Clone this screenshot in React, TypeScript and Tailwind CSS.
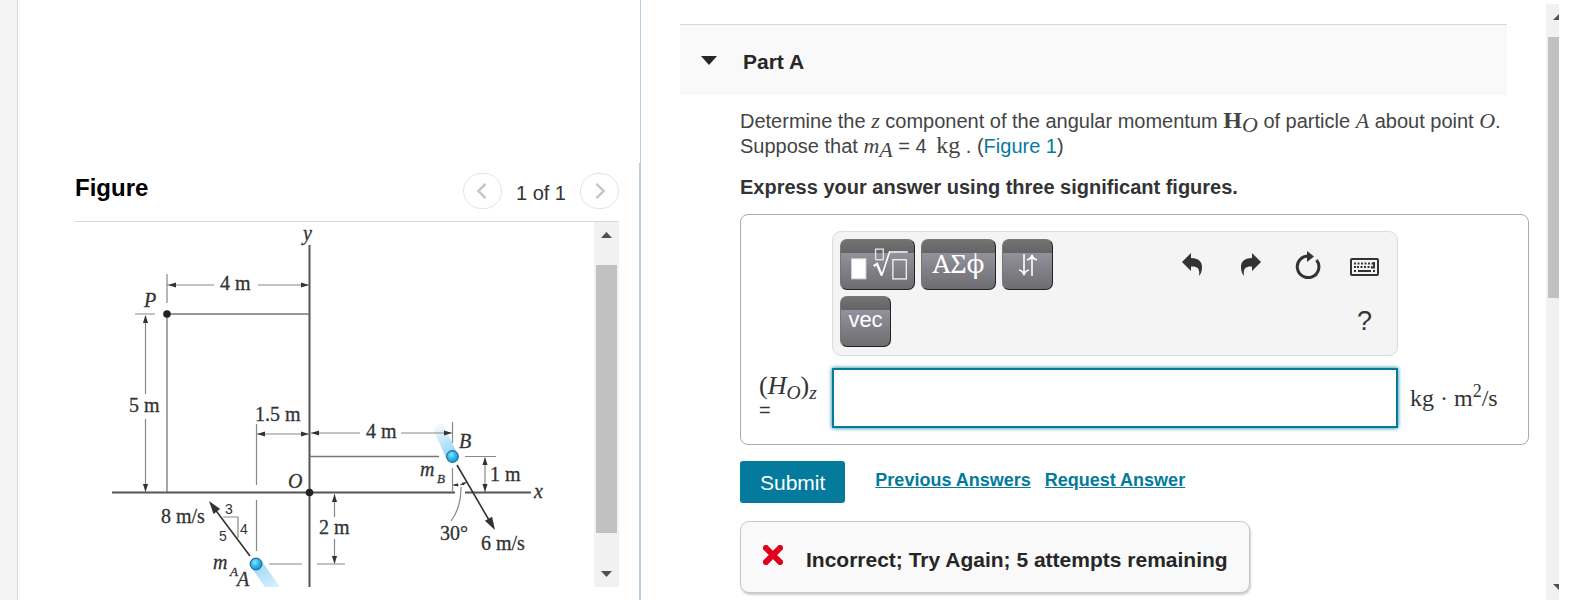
import { useState } from "react";
import type { ReactNode } from "react";

const LINKS = ["Previous Answers", "Request Answer"];

// italic maths symbol inside a sentence
function Sym({ children }: { children: ReactNode }) {
  return <i className="font-['Liberation_Serif',serif] text-[22px] leading-[0]">{children}</i>;
}

function Arrow({ x, y, angle, size = 8 }: { x: number; y: number; angle: number; size?: number }) {
  return (
    <path
      d={`M0 0L${-size} ${-size * 0.32}L${-size} ${size * 0.32}Z`}
      transform={`translate(${x} ${y}) rotate(${angle})`}
      fill="#333"
    />
  );
}

function Diagram() {
  return (
    <svg viewBox="75 222 519 365" className="block w-full min-w-0 flex-1 overflow-visible font-['Liberation_Serif',serif]" role="img" aria-label="Figure 1">
      <defs>
        <radialGradient id="ball" cx="0.4" cy="0.35" r="0.7">
          <stop offset="0" stopColor="#8fe0ff" />
          <stop offset="0.5" stopColor="#2bbcf2" />
          <stop offset="1" stopColor="#0a90d0" />
        </radialGradient>
        <linearGradient id="trailA" gradientUnits="userSpaceOnUse" x1="256" y1="564" x2="276" y2="590">
          <stop offset="0" stopColor="#9cd9f7" />
          <stop offset="1" stopColor="#dcf1fc" />
        </linearGradient>
        <linearGradient id="trailB" gradientUnits="userSpaceOnUse" x1="452" y1="456" x2="434" y2="424">
          <stop offset="0" stopColor="#8fd3f5" />
          <stop offset="1" stopColor="#ffffff" />
        </linearGradient>
      </defs>

      <path d="M251 567L261 560L280 587H265Z" fill="url(#trailA)" />
      <path d="M446 458L456 451L443 424L431 424Z" fill="url(#trailB)" />

      {/* axes */}
      <g stroke="#555" strokeWidth="2" fill="none">
        <path d="M309.500 245V587M112 492.500H455M465 492.500H531" />
      </g>

      {/* position lines */}
      <g stroke="#777" strokeWidth="1.300" fill="none">
        <path d="M167 314H309M167 314V492M310 456.500H439" />
      </g>

      {/* dimension lines */}
      <g stroke="#888" strokeWidth="1.200" fill="none">
        <path d="M167 274V303M167 285H214M258 285H309" />
        <path d="M135 314H155M145.500 316V394M145.500 419V492" />
        <path d="M256.500 424V485M256.500 500V551M257 434H309" />
        <path d="M311 433H360M401 433H452M452.500 422V443M452.500 468V492" />
        <path d="M465 456.500H496M485 458V492" />
        <path d="M334.500 494V517M334.500 539V563M269 564H302M317 564H345" />
        <path d="M223 517H238V538" />
        <path d="M461 487Q461 508 451 521" />
      </g>
      <path d="M453.500 485Q460 486 467 482" stroke="#333" strokeWidth="1.300" strokeDasharray="5 2" fill="none" />
      <path d="M250 556L211 504M457 465L493 527" stroke="#333" strokeWidth="1.600" fill="none" />

      <Arrow x={168} y={285} angle={180} />
      <Arrow x={309} y={285} angle={0} />
      <Arrow x={145.5} y={315} angle={-90} />
      <Arrow x={145.5} y={492} angle={90} />
      <Arrow x={257} y={434} angle={180} />
      <Arrow x={309} y={434} angle={0} />
      <Arrow x={311} y={433} angle={180} />
      <Arrow x={452} y={433} angle={0} />
      <Arrow x={485} y={457} angle={-90} />
      <Arrow x={485} y={492} angle={90} />
      <Arrow x={334.5} y={494} angle={-90} />
      <Arrow x={334.5} y={564} angle={90} />
      <Arrow x={453} y={485} angle={178} size={5} />
      <Arrow x={467} y={482} angle={-25} size={5} />
      <Arrow x={209} y={501} angle={-127} size={13} />
      <Arrow x={495} y={530} angle={60} size={13} />

      <circle cx="167" cy="314" r="3.800" fill="#222" />
      <circle cx="309.500" cy="492.500" r="3.800" fill="#222" />
      <circle cx="256" cy="564" r="5.800" fill="url(#ball)" stroke="#2a6f96" strokeWidth="1.200" />
      <circle cx="452.500" cy="456.500" r="5.800" fill="url(#ball)" stroke="#2a6f96" strokeWidth="1.200" />

      <g fill="#333" stroke="#333" strokeWidth="0.300" fontSize="20">
        <text x="220" y="290">4 m</text>
        <text x="129" y="412">5 m</text>
        <text x="255" y="421">1.5 m</text>
        <text x="366" y="438">4 m</text>
        <text x="490" y="481">1 m</text>
        <text x="319" y="534">2 m</text>
        <text x="161" y="523">8 m/s</text>
        <text x="440" y="540">30°</text>
        <text x="481" y="550">6 m/s</text>
      </g>
      <g fill="#333" stroke="#333" strokeWidth="0.300" fontSize="20" fontStyle="italic">
        <text x="303" y="240">y</text>
        <text x="144" y="307">P</text>
        <text x="288" y="488">O</text>
        <text x="534" y="498">x</text>
        <text x="459" y="448">B</text>
        <text x="420" y="476">m</text>
        <text x="213" y="569">m</text>
        <text x="237" y="586">A</text>
        <text x="437" y="483" fontSize="13">B</text>
        <text x="230" y="576" fontSize="13">A</text>
      </g>
      <g fill="#333" fontSize="14" className="font-['Liberation_Sans',sans-serif]">
        <text x="225" y="514">3</text>
        <text x="240" y="534">4</text>
        <text x="219" y="541">5</text>
      </g>
    </svg>
  );
}

function FigurePanel() {
  return (
    <div className="flex-1 border-r border-[#bccde0] pt-2.5 pr-5 pl-[57px]">
      <div className="flex h-[49px] items-start justify-between border-b border-[#d8d8d8]">
        <h2 className="pt-0.5 text-[24px] leading-[26px] font-bold text-black">Figure</h2>
        <div className="flex items-center text-[20px] text-[#333]">
          <button aria-label="Previous figure" className="flex h-9 w-[39px] items-center justify-center rounded-full border border-[#e4e4e4]">
            <Chevron d="M11 2L3 10L11 18" />
          </button>
          <span className="px-3.5 pt-1">1 of 1</span>
          <button aria-label="Next figure" className="flex h-9 w-[39px] items-center justify-center rounded-full border border-[#e4e4e4]">
            <Chevron d="M3 2L11 10L3 18" />
          </button>
        </div>
      </div>
      <div className="flex">
        <Diagram />
        <div className="flex w-[25px] flex-col items-center justify-between bg-[#f1f1f1] pt-2.5 pb-2.5">
          <svg viewBox="0 0 11 6" className="h-1.5 w-[11px]"><path d="M0 6L5.500 0L11 6Z" fill="#505050" /></svg>
          <div className="mt-[27px] mb-[38px] w-[21px] flex-1 bg-[#c1c1c1]" />
          <svg viewBox="0 0 11 6" className="h-1.5 w-[11px]"><path d="M0 0L5.500 6L11 0Z" fill="#505050" /></svg>
        </div>
      </div>
    </div>
  );
}

function Chevron({ d }: { d: string }) {
  return (
    <svg viewBox="0 0 14 20" className="h-[18px] w-3.5" fill="none" stroke="#c4c4c4" strokeWidth="2.600">
      <path d={d} />
    </svg>
  );
}

function KeyButton({ label, wide, children }: { label: string; wide?: boolean; children: ReactNode }) {
  return (
    <button
      aria-label={label}
      className={`${wide ? "w-[75px]" : "w-[51px]"} flex h-[51px] items-center justify-center rounded-[7px] border border-t-[#777] border-r-[#222] border-b-[#222] border-l-[#777] bg-[linear-gradient(#737373_0,#646464_13px,#93919c_13px,#6d6d70_100%)] text-white`}
    >
      {children}
    </button>
  );
}

function Toolbar() {
  return (
    <div className="flex justify-between rounded-[9px] border border-[#dcdcdc] bg-[#f4f4f4] pt-[7px] pr-1 pb-2 pl-[7px]">
      <div className="flex w-[214px] flex-wrap gap-1.5">
        <KeyButton label="Templates" wide>
          <svg viewBox="0 0 75 51" className="h-[49px] w-[73px]" fill="none" stroke="#fff">
            <rect x="10.500" y="19.500" width="15" height="21" fill="#fff" stroke="#d0d0d0" />
            <rect x="35.500" y="9.500" width="8" height="11" stroke="#e4e4e4" strokeWidth="1.400" />
            <path d="M33.500 27L37 25L42 37" strokeWidth="2.400" />
            <path d="M42 37L50 12.500H69" strokeWidth="1.600" />
            <rect x="53.500" y="20.500" width="14" height="20" stroke="#f0f0f0" strokeWidth="1.400" />
          </svg>
        </KeyButton>
        <KeyButton label="Symbols" wide>
          <span className="pb-1 font-['Noto_Serif','Liberation_Serif',serif] text-[26px] leading-none">ΑΣϕ</span>
        </KeyButton>
        <KeyButton label="Subscript and superscript">
          <svg viewBox="0 0 20 24" className="h-6 w-5" fill="none" stroke="#fff" strokeWidth="1.600">
            <path d="M6 1V22M1 17Q5 18 6 22Q7 18 11 17M14 23V2M9 7Q13 6 14 2Q15 6 19 7" />
          </svg>
        </KeyButton>
        <KeyButton label="Vector">
          <span className="pb-1 text-[22px] leading-none">vec</span>
        </KeyButton>
      </div>
      <div className="grid auto-rows-[51px] grid-cols-[57px_57px_57px_57px] gap-y-1.5 text-[#333]">
        <button aria-label="Undo" className="flex items-center justify-center pr-1">
          <svg viewBox="0 0 20 23" className="h-[23px] w-5" fill="currentColor">
            <path d="M0 9L9 0V5C17 5 20 9 20 14C20 18 19 21 17 23C18 16 16 13 9 13.500V18Z" />
          </svg>
        </button>
        <button aria-label="Redo" className="flex items-center justify-center">
          <svg viewBox="0 0 20 23" className="h-[23px] w-5" fill="currentColor">
            <path d="M20 9L11 0V5C3 5 0 9 0 14C0 18 1 21 3 23C2 16 4 13 11 13.500V18Z" />
          </svg>
        </button>
        <button aria-label="Reset" className="flex items-center justify-center">
          <svg viewBox="0 0 26 28" className="h-7 w-[26px]" fill="none" stroke="currentColor" strokeWidth="3">
            <path d="M14 5A10.800 10.800 0 1 0 21.500 9" />
            <path d="M12 0L19 5.500L12 11Z" fill="currentColor" stroke="none" />
          </svg>
        </button>
        <button aria-label="Keyboard shortcuts" className="flex items-center justify-center pt-1">
          <svg viewBox="0 0 29 18" className="h-[18px] w-[29px]" fill="none" stroke="currentColor" strokeWidth="2">
            <rect x="1" y="1" width="27" height="16" rx="1" />
            <path d="M4 5.500H23M4 9H6M7 9H22M4 13H6M23 13H25" strokeDasharray="2 1.500" />
            <path d="M8 13H21M24 4V9.500H21" />
          </svg>
        </button>
        <button aria-label="Help" className="col-start-4 text-[27px] leading-none">?</button>
      </div>
    </div>
  );
}

function AnswerBox() {
  const [answer, setAnswer] = useState("");
  return (
    <div className="mt-3.5 grid grid-cols-[73px_1fr_112px] gap-y-3 rounded-lg border border-[#aaa] px-[18px] pt-4 pb-4">
      <div className="col-start-2">
        <Toolbar />
      </div>
      <label htmlFor="answer" className="col-start-1 pt-1.5 text-[20px] leading-6 text-[#333]">
        <span className="block font-['Liberation_Serif',serif] text-[26px] whitespace-nowrap">
          (<i>H</i><sub><i>O</i></sub>)<sub><i>z</i></sub>
        </span>
        <span className="block leading-6">=</span>
      </label>
      <input
        id="answer"
        value={answer}
        onChange={e => setAnswer(e.target.value)}
        className="h-[60px] w-full border-2 border-[#047a9c] bg-white px-3 text-[22px] shadow-[0_0_4px_#047a9c] outline-none"
      />
      <div className="self-center pl-3 font-['Liberation_Serif',serif] text-[24px] whitespace-nowrap text-[#333]">
        kg · m<sup>2</sup>/s
      </div>
    </div>
  );
}

export default function App() {
  return (
    <div className="grid h-screen grid-cols-[641fr_938fr] overflow-hidden bg-white font-['Liberation_Sans',Arial,sans-serif]">
      <aside className="flex border-r border-[#bccde0]">
        <div className="w-[18px] shrink-0 border-r border-[#d8d8d8] bg-[#f4f4f4]" />
        <div className="flex min-w-0 flex-1 flex-col pt-[163px]">
          <FigurePanel />
        </div>
      </aside>

      <main className="flex min-w-0 pr-5">
        <div className="min-w-0 flex-1 pt-6 pl-[39px]">
          <header className="mr-[39px] flex h-[71px] items-center border-t border-[#d8d8d8] bg-[#f9f9f9] pl-[21px] text-[#262626]">
            <button aria-label="Collapse Part A" className="w-[42px]">
              <svg viewBox="0 0 16 9" className="h-[9px] w-4"><path d="M0 0H16L8 9Z" fill="currentColor" /></svg>
            </button>
            <h2 className="pt-1 text-[21px] font-bold">Part A</h2>
          </header>

          <div className="mr-[17px] pt-3.5 pl-[60px] text-[20px] leading-[25px] text-[#444]">
            <p className="mr-4">
              Determine the <Sym>z</Sym> component of the angular momentum{" "}
              <b className="font-['Liberation_Serif',serif] text-[24px] leading-[0]">H</b>
              <sub><Sym>O</Sym></sub> of particle <Sym>A</Sym> about point <Sym>O</Sym>.
              <br />
              Suppose that <Sym>m</Sym><sub><Sym>A</Sym></sub> = 4{" "}
              <span className="pl-1 font-['Liberation_Serif',serif] text-[24px] leading-[0]">kg</span> . (
              <a href="#figure" className="text-[#047a9c]">Figure 1</a>)
            </p>
            <p className="mt-4 font-bold text-[#333]">Express your answer using three significant figures.</p>

            <AnswerBox />

            <div className="mt-4 flex items-center">
              <button className="h-[42px] rounded-[3px] bg-[#047a9c] px-5 text-[21px] text-white">Submit</button>
              <div className="flex gap-3.5 pb-1 pl-[30px] text-[18px] font-bold text-[#047a9c]">
                {LINKS.map(l => (
                  <a key={l} href="#answers" className="underline">{l}</a>
                ))}
              </div>
            </div>

            <div role="status" className="mt-[18px] flex h-[72px] w-fit items-center rounded-[9px] border border-[#c7c7c7] bg-[#f9f9f9] pr-[21px] pl-[22px] font-bold text-[#262626] shadow-[1px_2px_2px_#d0d0d0]">
              <svg viewBox="0 0 20 20" className="mr-[23px] mb-1 size-5" stroke="#e0001b" strokeWidth="6" strokeLinejoin="round">
                <path d="M3 3L17 17M17 3L3 17" strokeLinecap="square" />
              </svg>
              <span className="pt-1 text-[21px]">Incorrect; Try Again; 5 attempts remaining</span>
            </div>
          </div>
        </div>

        <div className="mt-1 flex w-[13px] flex-col items-end overflow-hidden bg-[#f1f1f1] pt-2.5">
          <svg viewBox="0 0 6 6" className="size-1.5 shrink-0"><path d="M0 6L6 0V6Z" fill="#505050" /></svg>
          <div className="mt-[17px] h-[261px] w-[11px] bg-[#c1c1c1]" />
          <svg viewBox="0 0 6 6" className="mt-auto mb-2.5 size-1.5 shrink-0"><path d="M0 0H6V6Z" fill="#505050" /></svg>
        </div>
      </main>
    </div>
  );
}
